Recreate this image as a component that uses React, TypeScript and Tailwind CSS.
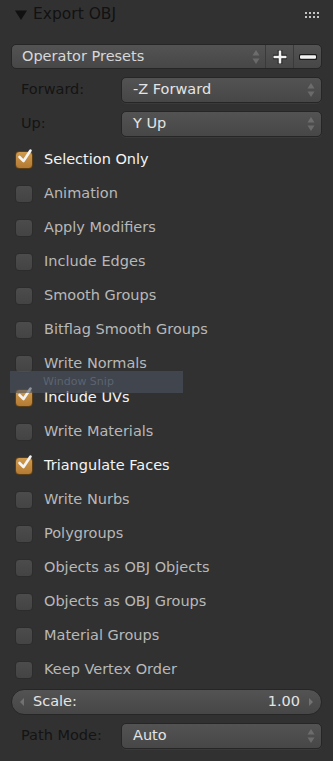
import React from 'react'

const options = [
  { label: 'Selection Only', checked: true },
  { label: 'Animation', checked: false },
  { label: 'Apply Modifiers', checked: false },
  { label: 'Include Edges', checked: false },
  { label: 'Smooth Groups', checked: false },
  { label: 'Bitflag Smooth Groups', checked: false },
  { label: 'Write Normals', checked: false },
  { label: 'Include UVs', checked: true },
  { label: 'Write Materials', checked: false },
  { label: 'Triangulate Faces', checked: true },
  { label: 'Write Nurbs', checked: false },
  { label: 'Polygroups', checked: false },
  { label: 'Objects as OBJ Objects', checked: false },
  { label: 'Objects as OBJ Groups', checked: false },
  { label: 'Material Groups', checked: false },
  { label: 'Keep Vertex Order', checked: false },
]

function UpDown() {
  return (
    <svg width="8" height="16" viewBox="0 0 8 16" className="opacity-40">
      <path d="M4 1 L7.5 6.5 H0.5 Z" fill="#9a9a9a" />
      <path d="M4 15 L7.5 9.5 H0.5 Z" fill="#9a9a9a" />
    </svg>
  )
}

function Dropdown({ value }: { value: string }) {
  return (
    <div className="flex-1 h-[26px] rounded-[5px] border border-[#262626] bg-gradient-to-b from-[#535353] to-[#474747] shadow-[0_1px_0_#3a3a3a] flex items-center pl-[11px] pr-[6px]">
      <span className="flex-1 text-[14.5px] text-[#e4e4e4]">{value}</span>
      <UpDown />
    </div>
  )
}

function Checkbox({ checked }: { checked: boolean }) {
  if (!checked)
    return (
      <div className="w-[18px] h-[18px] rounded-[4px] border border-[#2c2c2c] bg-gradient-to-b from-[#4c4c4c] to-[#444444]" />
    )
  return (
    <div className="relative w-[18px] h-[18px] rounded-[4px] border border-[#5c3d14] bg-gradient-to-b from-[#cf9a4e] to-[#b37a33]">
      <svg width="18" height="18" viewBox="0 0 18 18" className="absolute left-[0px] -top-[4px]">
        <path d="M3.5 9 L7.5 13 L14.5 2.5" fill="none" stroke="#f4f4f4" strokeWidth="2.6" strokeLinecap="round" strokeLinejoin="round" />
      </svg>
    </div>
  )
}

export default function App() {
  return (
    <div
      className="relative w-[333px] h-[761px] bg-[#313131] overflow-hidden select-none"
      style={{ fontFamily: '"DejaVu Sans", "Liberation Sans", sans-serif' }}
    >
      {/* header */}
      <div className="h-[30px] flex items-center pl-[15px] pr-[14px]">
        <svg width="12" height="10" viewBox="0 0 12 10">
          <path d="M0 0.5 H12 L6 10 Z" fill="#111" />
        </svg>
        <span className="ml-[6px] text-[15.5px] text-[#121212] flex-1">Export OBJ</span>
        <div className="grid grid-cols-4 gap-x-[2px] gap-y-[2px]">
          {Array.from({ length: 8 }).map((_, i) => (
            <div key={i} className="w-[2px] h-[2px] bg-[#c4c4c4]" />
          ))}
        </div>
      </div>

      {/* presets */}
      <div className="mt-[14px] mx-[11px] h-[25px] rounded-[5px] border border-[#262626] bg-gradient-to-b from-[#535353] to-[#474747] flex items-stretch">
        <div className="flex-1 flex items-center pl-[10px] pr-[5px] border-r border-[#3a3a3a]">
          <span className="flex-1 text-[14.5px] text-[#d8d8d8]">Operator Presets</span>
          <UpDown />
        </div>
        <div className="w-[28px] flex items-center justify-center border-r border-[#3a3a3a]">
          <svg width="18" height="18" viewBox="0 0 18 18">
            <path d="M9 2 V16 M2 9 H16" stroke="#1a1a1a" strokeWidth="4.5" />
            <path d="M9 2.5 V15.5 M2.5 9 H15.5" stroke="#f2f2f2" strokeWidth="2.6" />
          </svg>
        </div>
        <div className="w-[27px] flex items-center justify-center">
          <svg width="20" height="10" viewBox="0 0 20 10">
            <rect x="1" y="2" width="18" height="6" rx="1.5" fill="#1a1a1a" />
            <rect x="2" y="3.3" width="16" height="3.4" rx="1" fill="#f2f2f2" />
          </svg>
        </div>
      </div>

      {/* forward / up */}
      <div className="mt-[8px] mx-[11px] flex items-center">
        <span className="w-[110px] pl-[10px] text-[14.5px] text-[#141414]">Forward:</span>
        <Dropdown value="-Z Forward" />
      </div>
      <div className="mt-[8px] mx-[11px] flex items-center">
        <span className="w-[110px] pl-[10px] text-[14.5px] text-[#141414]">Up:</span>
        <Dropdown value="Y Up" />
      </div>

      {/* options */}
      <div className="mt-[6px] flex flex-col">
        {options.map((o) => (
          <div key={o.label} className="h-[34px] flex items-center pl-[15px]">
            <Checkbox checked={o.checked} />
            <span
              className={
                'ml-[11px] text-[14.5px] ' + (o.checked ? 'text-[#f4f4f4]' : 'text-[#b8b8b8]')
              }
            >
              {o.label}
            </span>
          </div>
        ))}
      </div>

      {/* scale */}
      <div className="mt-[2px] mx-[11px] h-[26px] rounded-full border border-[#262626] bg-gradient-to-b from-[#535353] to-[#474747] flex items-center px-[7px]">
        <svg width="6" height="10" viewBox="0 0 6 10" className="opacity-40">
          <path d="M5 1 L1 5 L5 9 Z" fill="#aaa" />
        </svg>
        <span className="ml-[8px] flex-1 text-[14.5px] text-[#e4e4e4]">Scale:</span>
        <span className="mr-[8px] text-[14.5px] text-[#e4e4e4]">1.00</span>
        <svg width="6" height="10" viewBox="0 0 6 10" className="opacity-40">
          <path d="M1 1 L5 5 L1 9 Z" fill="#aaa" />
        </svg>
      </div>

      {/* path mode */}
      <div className="mt-[8px] mx-[11px] flex items-center">
        <span className="w-[110px] pl-[10px] text-[14.5px] text-[#141414]">Path Mode:</span>
        <Dropdown value="Auto" />
      </div>

      {/* snipping tool overlay */}
      <div className="absolute left-[10px] top-[371px] w-[173px] h-[22px] bg-[#4b5462]/60 flex items-center pl-[33px]">
        <span className="text-[11px] text-[#5c6470]">Window Snip</span>
      </div>
    </div>
  )
}
